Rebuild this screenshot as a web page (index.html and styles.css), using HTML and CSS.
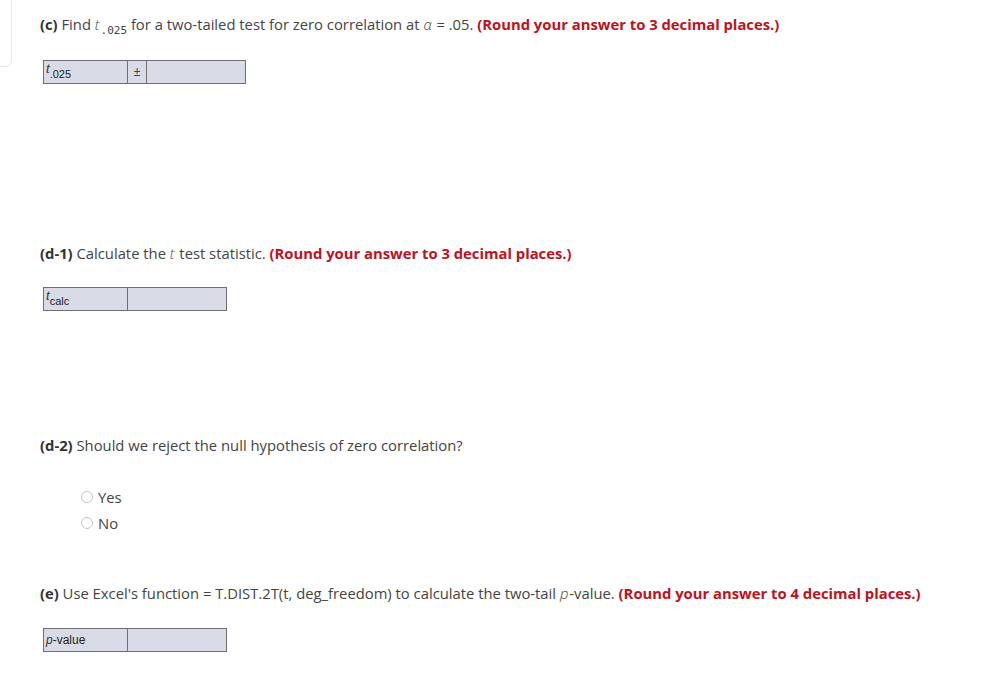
FILE: index.html
```html
<!DOCTYPE html>
<html>
<head>
<meta charset="utf-8">
<link rel="stylesheet" href="styles.css">
</head>
<body>
<div class="corner"></div>
<div class="page">
  <section class="part part-c">
    <p class="q"><b>(c)</b> Find <i class="var">t</i><sub class="mono">.025</sub> for a two-tailed test for zero correlation at <i class="alpha">α</i> = .05. <b class="red">(Round your answer to 3 decimal places.)</b></p>
    <div class="ans">
      <div class="cell label"><i class="var">t</i><sub>.025</sub></div>
      <div class="cell pm">±</div>
      <div class="cell input"></div>
    </div>
  </section>

  <section class="part part-d1">
    <p class="q"><b>(d-1)</b> Calculate the <i class="var">t</i> test statistic. <b class="red">(Round your answer to 3 decimal places.)</b></p>
    <div class="ans">
      <div class="cell label"><i class="var">t</i><sub>calc</sub></div>
      <div class="cell input"></div>
    </div>
  </section>

  <section class="part part-d2">
    <p class="q"><b>(d-2)</b> Should we reject the null hypothesis of zero correlation?</p>
    <div class="opts">
      <label class="opt"><span class="radio"></span>Yes</label>
      <label class="opt"><span class="radio"></span>No</label>
    </div>
  </section>

  <section class="part part-e">
    <p class="q"><b>(e)</b> Use Excel's function = T.DIST.2T(t, deg_freedom) to calculate the two-tail <i class="var">p</i>-value. <b class="red">(Round your answer to 4 decimal places.)</b></p>
    <div class="ans">
      <div class="cell label"><i class="var">p</i>-value</div>
      <div class="cell input"></div>
    </div>
  </section>
</div>
</body>
</html>
```

FILE: styles.css
```css
html, body {
  margin: 0;
  padding: 0;
  background: #fff;
}
body {
  font-family: "Open Sans", "Liberation Sans", sans-serif;
  color: #444;
  position: relative;
}
.corner {
  position: absolute;
  left: -10px;
  top: -10px;
  width: 20px;
  height: 75px;
  border: 1px solid #e6e6e6;
  border-radius: 0 0 6px 0;
}
.page {
  padding: 14px 0 0 40px;
}
.q {
  margin: 0;
  font-size: 14.8px;
  line-height: 20px;
}
.q b {
  font-weight: 700;
  color: #333;
}
.q .red {
  color: #c0111c;
}
.var,
.alpha {
  font-style: italic;
  font-weight: 300;
  padding-right: 1px;
}
.mono {
  font-family: "DejaVu Sans Mono", monospace;
  font-size: 11px;
  vertical-align: -4px;
  line-height: 0;
}
.ans {
  display: flex;
  margin-left: 3px;
  width: max-content;
  border: 1px solid #6f6f6f;
  background: #d9dce6;
  height: 22px;
}
.cell {
  height: 22px;
  box-sizing: border-box;
}
.cell + .cell {
  border-left: 1px solid #6f6f6f;
}
.label {
  width: 83px;
  font-family: "Liberation Sans", sans-serif;
  font-size: 12px;
  line-height: 22px;
  padding-left: 2px;
  color: #222;
}
.label .var {
  font-family: "Liberation Sans", sans-serif;
  font-size: 13px;
  font-weight: 400;
  padding-right: 0;
  color: #333;
  position: relative;
  top: -3px;
}
.label sub {
  font-size: 11px;
  vertical-align: -2px;
  line-height: 0;
}
.part-e .label .var {
  top: 0;
  font-size: 12px;
}
.pm {
  width: 19px;
  font-family: "Liberation Sans", sans-serif;
  font-size: 12px;
  line-height: 22px;
  text-align: center;
}
.input {
  width: 99px;
}
.part-c .ans {
  margin-top: 26px;
}
.part-d1 {
  margin-top: 159px;
}
.part-d1 .ans {
  margin-top: 24px;
}
.part-e .ans {
  margin-top: 25px;
}
.part-d2 {
  margin-top: 124px;
}
.opts {
  display: flex;
  flex-direction: column;
  gap: 6px;
  margin: 32px 0 0 41px;
}
.opt {
  display: flex;
  align-items: center;
  gap: 5px;
  font-size: 14.8px;
  line-height: 20px;
}
.radio {
  width: 12px;
  height: 12px;
  border: 1px solid #c4c4c4;
  border-radius: 50%;
  box-sizing: border-box;
  background: #fff;
}
.part-e {
  margin-top: 50px;
}
```
